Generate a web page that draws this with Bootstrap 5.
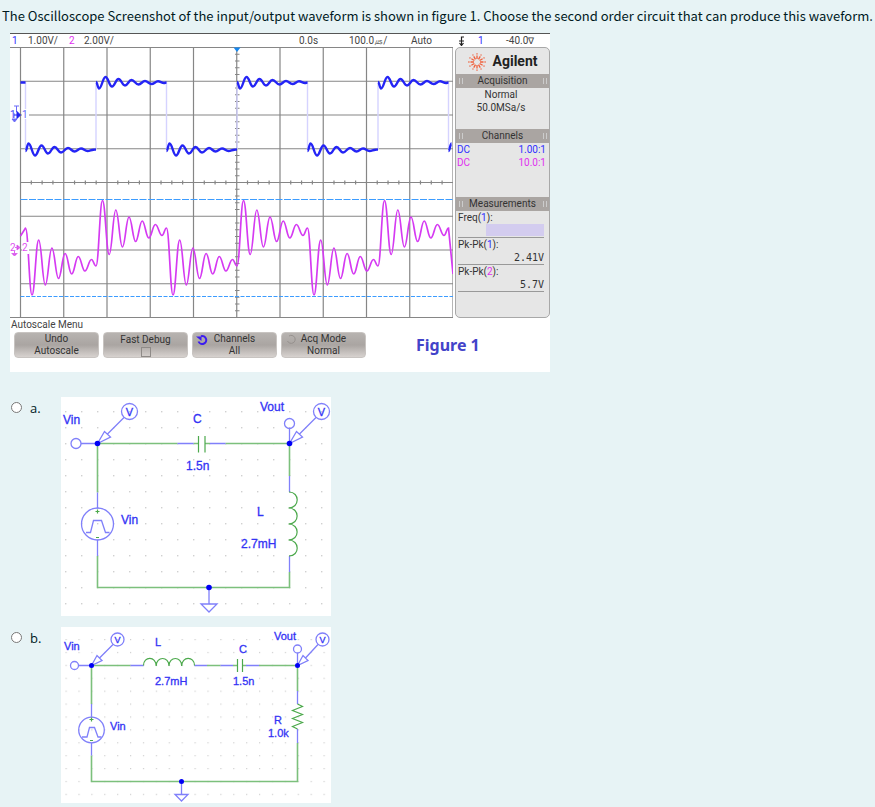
<!DOCTYPE html>
<html lang="en">
<head>
<meta charset="utf-8">
<meta name="viewport" content="width=device-width, initial-scale=1">
<title>Second order circuit question</title>
<link href="https://cdn.jsdelivr.net/npm/bootstrap@5.3.0/dist/css/bootstrap.min.css" rel="stylesheet">
<style>
body{background:#e7f3f5;color:#001a1e;font-family:"Open Sans","Noto Sans",sans-serif;font-size:13px;line-height:20px}
.question{padding:6px 0 0 2px;margin:0 0 7px;font-family:"Noto Sans CJK SC",sans-serif;font-size:13px}
.figure-box{max-width:540px;margin-left:10px;height:auto}
.scope{font-family:"Liberation Sans Narrow",Roboto,sans-serif;font-size:10px;line-height:13px;color:#444}
.readout{display:grid;grid-template-columns:16fr 41fr 15fr 215fr 50fr 62fr 47fr 20fr 28fr 42fr;padding:0 2px;border-top:1px solid #555;height:14px;white-space:nowrap}
.ch1{color:#3030ff}.ch2{color:#e030f0}
.plot{flex:1 1 0;min-width:0}
.side{width:95px;margin-left:2px;background:#e6e6e6;border:1px solid #a8a8a8;border-radius:5px;color:#333}
.brand{height:26px;font:bold 14px/26px Roboto,sans-serif;color:#222;gap:7px}
.band{background:#aaa5a2;height:14px;line-height:14px;padding:0 2px;color:#333}
.grip{width:5px;height:6px;background:radial-gradient(circle,#ccc 1px,transparent 1px) 0 0/3px 2px}
.acq{height:41px;padding-right:3px}.chan{height:54px;padding:0 3px 0 1px}
.meas{margin:0 5px 0 2px;height:27px;border-bottom:1px solid #999}
.meas output{font-family:"DejaVu Sans Mono",monospace;font-size:10px;display:block;text-align:right}
.blank{background:#d3ccef;height:12px;margin-left:28px}
.menu-title{padding-left:1px}
.softkeys{padding:1px 0 14px 4px;gap:4px}
.softkey{flex:0 1 85px;height:26px;border:1px solid #c8c4c1;border-radius:4px;background:linear-gradient(#b7b3b0,#aaa5a2 50%,#d7d2cf);color:#333;line-height:12px;font-size:10px;position:relative;padding:0}
.softkey svg{position:absolute;left:3px;top:1px}
.tickbox{width:10px;height:10px;border:1px solid #8f8b88;margin:1px auto 0;display:block}
.caption{font:bold 16px/20px "Noto Sans",sans-serif;color:#4343c9;margin-left:46px}
.answers{padding:25px 0 0 11px}
.answer{margin-bottom:11px}
.answer input{width:11px;height:11px;margin:5px 8px 0 0;flex:none}
.answer label{width:31px;flex:none;padding-top:1px}
.diagram{max-width:270px;flex:1 1 0;background:#fff;font-family:"Liberation Sans",Arial,sans-serif}
.diagram text{fill:#3333f5;stroke:#3333f5;stroke-width:.3}
.dev{stroke:#8080fa;fill:none;stroke-width:1.3}
.wire{stroke:#7cc07c;fill:none;stroke-width:1.6}
.part{stroke:#4ca94c;fill:none;stroke-width:1.2}
.node{fill:#0000f5}
</style>
</head>
<body>
<main>
<p class="question">The Oscilloscope Screenshot of the input/output waveform is shown in figure 1. Choose the second order circuit that can produce this waveform.</p>

<section class="figure-box scope bg-white" aria-label="Oscilloscope">
  <div class="readout">
    <span class="ch1">1</span><span>1.00V/</span><span class="ch2">2</span><span>2.00V/</span><span>0.0s</span><span>100.0<small>㎲</small>/</span><span>Auto</span>
    <span><svg width="7" height="10" viewBox="0 0 7 10"><path d="M6 1H3.500V9M1 5H6M1.500 7L3.500 9.500L5.500 7" fill="none" stroke="#222" stroke-width="1.200"/></svg></span>
    <span class="ch1">1</span><span>-40.0<small>∇</small></span>
  </div>
  <div class="d-flex">
    <svg class="plot" viewBox="10 47 443 271" role="img" aria-label="Input and output waveforms">
      <g id="grid" stroke="#868686" fill="none" stroke-width="1.2"></g>
      <path d="M20.500 199.500H453" stroke="#3c9cff" stroke-dasharray="7 1.500" fill="none"/>
      <path d="M20.500 296.500H453" stroke="#3c9cff" stroke-dasharray="4 1.500" fill="none"/>
      <path d="M25.500 82V149M96 82V149M166.500 82V149M237 82V149M307.500 82V149M378 82V149M448.500 82V149" stroke="#d5d3ff" stroke-width="1.400"/>
      <path id="input-wave" fill="none" stroke="#2424f5" stroke-width="2.400"/>
      <path id="output-wave" fill="none" stroke="#d53af2" stroke-width="1.700"/>
      <path d="M233.500 47.500H240.500L237 52Z" fill="#1687ef"/>
      <g font-size="10">
        <rect x="22" y="109" width="7" height="10" fill="#fff"/><rect x="22" y="242" width="7" height="12" fill="#fff"/>
        <text x="22" y="118" fill="#6565fa">1</text><text x="22" y="251" fill="#dd50f0">2</text>
        <text x="10" y="118" fill="#4545fa">1</text><text x="10" y="251" fill="#dd50f0">2</text>
      </g>
      <path d="M14 106H19M16.500 106V112M14 113V118M12 119H17L14.500 122Z" stroke="#6a6af8" fill="#6a6af8"/>
      <path d="M14 115H20M17 111.500L20.500 115L17 118.500Z" stroke="#2020f0" fill="#2020f0"/>
      <path d="M15 247.500H19M17 245L20 247.500L17 250ZM14.500 251V256M11.500 253.500H17.500M12.500 254L14.500 256L16.500 254" stroke="#dc66ee" fill="#cf20e0"/>
    </svg>
    <aside class="side">
      <div class="brand d-flex justify-content-center">
        <svg width="18" height="20" viewBox="-9 -10 18 20" class="mt-1"><g id="spark" stroke="#f0603c" stroke-width="1.300" stroke-dasharray="3.500 1 1.200 1"></g></svg>
        <span>Agilent</span>
      </div>
      <div class="band d-flex justify-content-between align-items-center"><i class="grip"></i><span>Acquisition</span><i class="grip"></i></div>
      <div class="acq text-center">Normal<br>50.0MSa/s</div>
      <div class="band d-flex justify-content-between align-items-center"><i class="grip"></i><span>Channels</span><i class="grip"></i></div>
      <div class="chan">
        <div class="d-flex justify-content-between ch1"><span>DC</span><span>1.00:1</span></div>
        <div class="d-flex justify-content-between ch2"><span>DC</span><span>10.0:1</span></div>
      </div>
      <div class="band d-flex justify-content-between align-items-center"><i class="grip"></i><span>Measurements</span><i class="grip"></i></div>
      <div class="meas">Freq(<span class="ch1">1</span>):<div class="blank"></div></div>
      <div class="meas">Pk-Pk(<span class="ch1">1</span>):<output>2.41V</output></div>
      <div class="meas">Pk-Pk(<span class="ch2">2</span>):<output>5.7V</output></div>
    </aside>
  </div>
  <div class="menu-title">Autoscale Menu</div>
  <div class="softkeys d-flex align-items-center">
    <button class="softkey" type="button">Undo<br>Autoscale</button>
    <button class="softkey" type="button">Fast Debug<span class="tickbox"></span></button>
    <button class="softkey" type="button"><svg width="12" height="11" viewBox="0 0 12 11"><path d="M5 2.200A4 4 0 1 1 2.500 7.500" fill="none" stroke="#3c1cf0" stroke-width="2"/><path d="M0 2.500H5.500V7Z" fill="#3c1cf0"/></svg>Channels<br>All</button>
    <button class="softkey" type="button"><svg width="12" height="11" viewBox="0 0 12 11"><path d="M4 2A4 4 0 1 1 2.500 7" fill="none" stroke="#96918e" stroke-width="1"/></svg>Acq Mode<br>Normal</button>
    <span class="caption">Figure 1</span>
  </div>
</section>

<form class="answers">
  <div class="answer d-flex align-items-start">
    <input type="radio" name="answer" id="answer-a"><label for="answer-a">a.</label>
    <svg class="diagram" viewBox="61 397 270 219" role="img" aria-label="Series capacitor, shunt inductor">
      <defs><pattern id="dots-a" x="65" y="411" width="16" height="16" patternUnits="userSpaceOnUse"><rect width="1.400" height="1.400" fill="#d0d0d0"/></pattern></defs>
      <rect x="64" y="405" width="265" height="208" fill="url(#dots-a)"/>
      <path class="wire" d="M97.500 492.500V443.500H177.500M193.500 443.500H198.500M205 443.500H210M225.500 443.500H289.500V476M289.500 572V587.500H97.500V556"/>
      <path class="dev" d="M81 443.500H97.500M177.500 443.500H193.500M210 443.500H225.500M97.500 492.500V508.500M97.500 540V556M289.500 428.500V443.500M289.500 476V492M289.500 556V572M209 587.500V604M201 604H217L209 612ZM86 532.500H90.500L93.500 520.500H101.500L105.500 532.500H109.500M97.500 443.500L104.500 431.500L110.500 437ZM107.500 434L124 417.500M289.500 443.500L296.500 431.500L302.500 437ZM299.500 434L316 417.500"/>
      <g class="dev"><circle cx="76" cy="443.500" r="5"/><circle cx="289.500" cy="423.500" r="5"/><circle cx="97.500" cy="524" r="16"/><circle cx="129.500" cy="411.500" r="8"/><circle cx="321.500" cy="411.500" r="8"/></g>
      <path class="part" d="M198.500 436V452.500M205 436V452.500M95.500 511.500H99.500M97.500 509.500V513.500M96 537.500H99M289 492C300 492 300 508 288.500 508C300 508 300 524 288.500 524C300 524 300 540 288.500 540C300 540 300 556 289 556"/>
      <g class="node"><circle cx="97.500" cy="443.500" r="2.800"/><circle cx="289.500" cy="443.500" r="2.800"/><circle cx="209" cy="587.500" r="2.800"/></g>
      <g font-size="12">
        <text x="63" y="424">Vin</text><text x="121" y="524">Vin</text><text x="193" y="423">C</text><text x="186" y="470">1.5n</text><text x="260" y="411">Vout</text><text x="257" y="516">L</text><text x="241" y="548">2.7mH</text>
        <text x="129.500" y="415.500" font-size="11" text-anchor="middle">V</text><text x="321.500" y="415.500" font-size="11" text-anchor="middle">V</text>
      </g>
    </svg>
  </div>
  <div class="answer d-flex align-items-start">
    <input type="radio" name="answer" id="answer-b"><label for="answer-b">b.</label>
    <svg class="diagram" viewBox="61 627 270 176" role="img" aria-label="Series inductor and capacitor, shunt resistor">
      <defs><pattern id="dots-b" x="65.500" y="639" width="12.900" height="12.900" patternUnits="userSpaceOnUse"><rect width="1.200" height="1.200" fill="#d0d0d0"/></pattern></defs>
      <rect x="64" y="634" width="265" height="166" fill="url(#dots-b)"/>
      <path class="wire" d="M91.500 704V665.500H130.500M207 665.500H220.500M233 665.500H237.500M242.500 665.500H246M259 665.500H297.500V691M297.500 743V781.500H91.500V755.500"/>
      <path class="dev" d="M78.500 665.500H91.500M130.500 665.500H143.500M194.500 665.500H207M220.500 665.500H233M246 665.500H259M91.500 704V717M91.500 743V755.500M297.500 653V665.500M297.500 691V704M297.500 729V743M181.500 781.500V794.500M175 794.500H188L181.500 801ZM82 737H87L89.500 727.500H94.500L98 737H101.500M91.500 665.500L97 655.500L102 660.500ZM99.500 658L113 644.500M297.500 665.500L303 655.500L308 660.500ZM305.500 658L318 644.500"/>
      <g class="dev"><circle cx="74.500" cy="665.500" r="4"/><circle cx="297.500" cy="649" r="4"/><circle cx="91.500" cy="730" r="12.800"/><circle cx="117.500" cy="639.500" r="6.500"/><circle cx="322.500" cy="639.500" r="6.500"/></g>
      <path class="part" d="M143.500 665.500C143.500 656 156.200 656 156.200 666C156.200 656 169 656 169 666C169 656 181.700 656 181.700 666C181.700 656 194.500 656 194.500 665.500M237.500 659V672M242.500 659V672M89.500 719.500H93.500M91.500 717.500V721.500M90 740.500H93M297.500 704L302.500 706.500L292.500 710.500L302.500 714.500L292.500 718.500L302.500 722.500L292.500 726.500L297.500 729"/>
      <g class="node"><circle cx="91.500" cy="665.500" r="2.500"/><circle cx="297.500" cy="665.500" r="2.500"/><circle cx="181.500" cy="781.500" r="2.500"/></g>
      <g font-size="11">
        <text x="64" y="650">Vin</text><text x="110" y="730">Vin</text><text x="155" y="646">L</text><text x="155" y="685">2.7mH</text><text x="239" y="653">C</text><text x="233" y="685">1.5n</text><text x="274" y="640">Vout</text><text x="274" y="724">R</text><text x="268" y="737">1.0k</text>
        <text x="117.500" y="643" font-size="9" text-anchor="middle">V</text><text x="322.500" y="643" font-size="9" text-anchor="middle">V</text>
      </g>
    </svg>
  </div>
</form>
</main>
<script src="https://cdn.jsdelivr.net/npm/bootstrap@5.3.0/dist/js/bootstrap.bundle.min.js"></script>
<script>
// Graticule: 10 x 8 divisions with minor ticks on both centre axes
let g = '';
for (let i = 0; i <= 10; i++) g += `M${20.5 + i * 43.25} 47.5V317.5`;
for (let j = 0; j <= 8; j++) g += `M${j === 8 || j === 0 ? 10 : 20.5} ${47.5 + j * 33.75}H453`;
for (let i = 0; i < 40; i++) g += `M${20.5 + i * 10.81} 180.5V184.5`;
for (let j = 0; j < 40; j++) g += `M235 ${47.5 + j * 6.75}H239.5`;
document.getElementById('grid').innerHTML = `<path d="${g}"/>`;

// Each list holds the ringing extrema [dx, y] after an edge
const t = [0, 3, 9.5, 16, 22.5, 29, 35.5, 42.5, 49, 55.5, 62, 68, 70.5];
const inHigh = [82, 88.5, 77, 86.5, 79, 85.5, 80, 84.5, 81, 84, 81.3, 83, 82.5].map((y, i) => [t[i], y]);
const inLow = [151, 143.5, 155.5, 145.5, 153.5, 147, 152.5, 148, 151.5, 148.5, 151, 149.7, 149.5].map((y, i) => [t[i], y]);
const u = [0, 6.5, 13.2, 19.8, 26.4, 33, 39.6, 46.2, 52.8, 59.4, 66, 70.5];
const outLow = [228, 295, 240, 285, 248, 278.5, 253.5, 274, 256.5, 271, 259.5, 266].map((y, i) => [u[i], y]);
const outHigh = [266, 200.5, 254.5, 210, 247, 217, 241.5, 221, 238, 224.5, 235.5, 228].map((y, i) => [u[i], y]);
function ring(x0, pts, join) {
  let d = '', p = null;
  for (const [dx, y] of pts) {
    const x = x0 + dx;
    if (x > 453) break;
    if (!p) d += `${join ? 'L' : 'M'}${x} ${y}`;
    else { const h = (x - p[0]) * 0.42; d += `C${p[0] + h} ${p[1]} ${x - h} ${y} ${x} ${y}`; }
    p = [x, y];
  }
  return d;
}
let a = 'M20.5 82.5H25.5', b = 'M20.5 236L25.5 228';
[25.5, 166.5, 307.5, 448.5].forEach(x => {
  a += ring(x, inLow);
  if (x < 448) { a += ring(x + 70.5, inHigh); b += ring(x, outLow, true) + ring(x + 70.5, outHigh, true); }
});
b += 'L453 274';
document.getElementById('input-wave').setAttribute('d', a);
document.getElementById('output-wave').setAttribute('d', b);

let s = '';
for (let k = 0; k < 12; k++) s += `<path d="M0 -3V-9" transform="rotate(${k * 30})"/>`;
document.getElementById('spark').innerHTML = s;
</script>
</body>
</html>
